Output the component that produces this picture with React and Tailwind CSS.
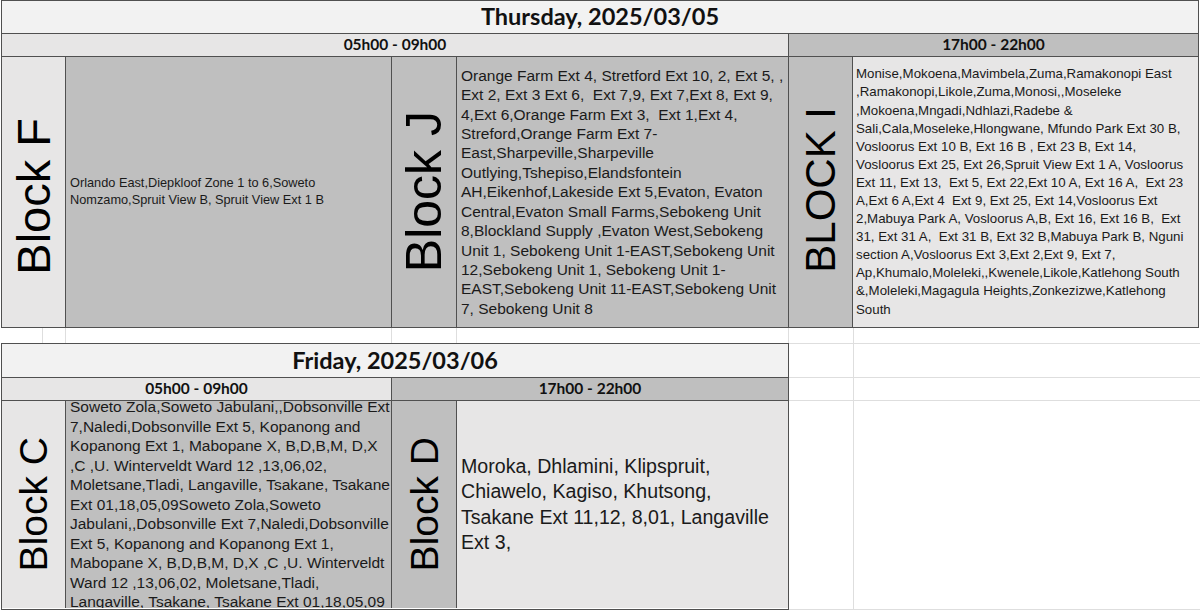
import React from 'react';

// spreadsheet colours
const LIGHT = 'bg-[#e7e6e6]';
const GRAY = 'bg-[#bfbfbf]';

const blockF = [
  'Orlando East,Diepkloof Zone 1 to 6,Soweto',
  'Nomzamo,Spruit View B, Spruit View Ext 1 B',
];

const blockJ = [
  'Orange Farm Ext 4, Stretford Ext 10, 2, Ext 5, ,',
  'Ext 2, Ext 3 Ext 6,  Ext 7,9, Ext 7,Ext 8, Ext 9,',
  '4,Ext 6,Orange Farm Ext 3,  Ext 1,Ext 4,',
  'Streford,Orange Farm Ext 7-',
  'East,Sharpeville,Sharpeville',
  'Outlying,Tshepiso,Elandsfontein',
  'AH,Eikenhof,Lakeside Ext 5,Evaton, Evaton',
  'Central,Evaton Small Farms,Sebokeng Unit',
  '8,Blockland Supply ,Evaton West,Sebokeng',
  'Unit 1, Sebokeng Unit 1-EAST,Sebokeng Unit',
  '12,Sebokeng Unit 1, Sebokeng Unit 1-',
  'EAST,Sebokeng Unit 11-EAST,Sebokeng Unit',
  '7, Sebokeng Unit 8',
];

const blockI = [
  'Monise,Mokoena,Mavimbela,Zuma,Ramakonopi East',
  ',Ramakonopi,Likole,Zuma,Monosi,,Moseleke',
  ',Mokoena,Mngadi,Ndhlazi,Radebe &',
  'Sali,Cala,Moseleke,Hlongwane, Mfundo Park Ext 30 B,',
  'Vosloorus Ext 10 B, Ext 16 B , Ext 23 B, Ext 14,',
  'Vosloorus Ext 25, Ext 26,Spruit View Ext 1 A, Vosloorus',
  'Ext 11, Ext 13,  Ext 5, Ext 22,Ext 10 A, Ext 16 A,  Ext 23',
  'A,Ext 6 A,Ext 4  Ext 9, Ext 25, Ext 14,Vosloorus Ext',
  '2,Mabuya Park A, Vosloorus A,B, Ext 16, Ext 16 B,  Ext',
  '31, Ext 31 A,  Ext 31 B, Ext 32 B,Mabuya Park B, Nguni',
  'section A,Vosloorus Ext 3,Ext 2,Ext 9, Ext 7,',
  'Ap,Khumalo,Moleleki,,Kwenele,Likole,Katlehong South',
  '&,Moleleki,Magagula Heights,Zonkezizwe,Katlehong',
  'South',
];

const blockC = [
  'Soweto Zola,Soweto Jabulani,,Dobsonville Ext',
  '7,Naledi,Dobsonville Ext 5, Kopanong and',
  'Kopanong Ext 1, Mabopane X, B,D,B,M, D,X',
  ',C ,U. Winterveldt Ward 12 ,13,06,02,',
  'Moletsane,Tladi, Langaville, Tsakane, Tsakane',
  'Ext 01,18,05,09Soweto Zola,Soweto',
  'Jabulani,,Dobsonville Ext 7,Naledi,Dobsonville',
  'Ext 5, Kopanong and Kopanong Ext 1,',
  'Mabopane X, B,D,B,M, D,X ,C ,U. Winterveldt',
  'Ward 12 ,13,06,02, Moletsane,Tladi,',
  'Langaville, Tsakane, Tsakane Ext 01,18,05,09',
];

const blockD = [
  'Moroka, Dhlamini, Klipspruit,',
  'Chiawelo, Kagiso, Khutsong,',
  'Tsakane Ext 11,12, 8,01, Langaville',
  'Ext 3,',
];

function Label({ text, bg, w, size }) {
  return (
    <div className={`${w} ${bg} shrink-0 border-r border-[#505050] flex items-center justify-center overflow-hidden`}>
      <span className={`[writing-mode:vertical-rl] rotate-180 leading-none text-black ${size}`}>{text}</span>
    </div>
  );
}

function Areas({ lines, bg, w, size }) {
  return (
    <div className={`${w} ${bg} border-r border-[#505050] flex flex-col justify-center overflow-hidden pl-[4px] text-[#1a1a1a] ${size}`}>
      {lines.map((l, i) => (
        <div key={i} className="whitespace-pre">{l}</div>
      ))}
    </div>
  );
}

export default function App() {
  return (
    <div className="w-[1200px] h-[612px] overflow-hidden bg-white font-['Liberation_Sans',Arial,sans-serif]">
      {/* Thursday */}
      <div className="ml-[1px] w-[1198px] border border-[#505050]">
        <div className="h-[33px] border-b border-[#505050] bg-[#f2f2f2] flex items-center justify-center font-['Lato',sans-serif] font-bold text-[23.5px] text-[#111]">
          Thursday, 2025/03/05
        </div>
        <div className="h-[23px] border-b border-[#505050] flex font-['Lato',sans-serif] font-bold text-[15.5px] text-[#111]">
          <div className={`w-[787px] border-r border-[#505050] ${LIGHT} flex items-center justify-center`}>05h00 - 09h00</div>
          <div className={`flex-1 ${GRAY} flex items-center justify-center`}>17h00 - 22h00</div>
        </div>
        <div className="h-[270px] flex">
          <Label text="Block F" bg={LIGHT} w="w-[64px]" size="text-[47px] translate-y-[4px]" />
          <Areas lines={blockF} bg={GRAY} w="w-[326px]" size="text-[12.75px] leading-[16.7px]" />
          <Label text="Block J" bg={GRAY} w="w-[65px]" size="text-[50px]" />
          <Areas lines={blockJ} bg={GRAY} w="w-[332px]" size="text-[15.5px] leading-[19.4px]" />
          <Label text="BLOCK I" bg={GRAY} w="w-[64px]" size="text-[42px] -translate-y-[2px]" />
          <div className={`flex-1 ${LIGHT} flex flex-col justify-center overflow-hidden pl-[3px] text-[#1a1a1a] text-[13.3px] leading-[18.1px]`}>
            {blockI.map((l, i) => (
              <div key={i} className="whitespace-pre">{l}</div>
            ))}
          </div>
        </div>
      </div>

      {/* empty sheet row between the two days */}
      <div className="h-[15px] flex">
        <div className="w-[43px] border-r border-[#dedede]" />
        <div className="w-[23px] border-r border-[#dedede]" />
        <div className="w-[326px] border-r border-[#dedede]" />
        <div className="w-[65px] border-r border-[#dedede]" />
        <div className="w-[332px] border-r border-[#dedede]" />
        <div className="w-[65px] border-r border-[#dedede]" />
        <div className="flex-1" />
      </div>

      <div className="flex">
        {/* Friday */}
        <div className="ml-[1px] w-[788px] border border-[#505050] shrink-0">
          <div className="h-[34px] border-b border-[#505050] bg-[#f2f2f2] flex items-center justify-center font-['Lato',sans-serif] font-bold text-[23.5px] text-[#111]">
            Friday, 2025/03/06
          </div>
          <div className="h-[23px] border-b border-[#505050] flex font-['Lato',sans-serif] font-bold text-[15.5px] text-[#111]">
            <div className={`w-[390px] border-r border-[#505050] ${LIGHT} flex items-center justify-center`}>05h00 - 09h00</div>
            <div className={`flex-1 ${GRAY} flex items-center justify-center`}>17h00 - 22h00</div>
          </div>
          <div className="h-[207px] flex">
            <Label text="Block C" bg={LIGHT} w="w-[64px]" size="text-[39px]" />
            <Areas lines={blockC} bg={GRAY} w="w-[326px]" size="text-[15.5px] leading-[19.5px]" />
            <Label text="Block D" bg={GRAY} w="w-[65px]" size="text-[39px]" />
            <div className={`flex-1 ${LIGHT} flex flex-col justify-center overflow-hidden pl-[4px] text-[#1a1a1a] text-[19.6px] leading-[25.5px]`}>
              {blockD.map((l, i) => (
                <div key={i} className="whitespace-pre">{l}</div>
              ))}
            </div>
          </div>
        </div>

        {/* empty cells to the right of Friday */}
        <div className="flex-1 flex flex-col">
          <div className="h-[35px] border-y border-[#dedede] flex">
            <div className="w-[65px] border-r border-[#dedede]" />
          </div>
          <div className="h-[23px] border-b border-[#dedede] flex">
            <div className="w-[65px] border-r border-[#dedede]" />
          </div>
          <div className="h-[209px] border-b border-[#dedede] flex">
            <div className="w-[65px] border-r border-[#dedede]" />
          </div>
        </div>
      </div>
    </div>
  );
}
